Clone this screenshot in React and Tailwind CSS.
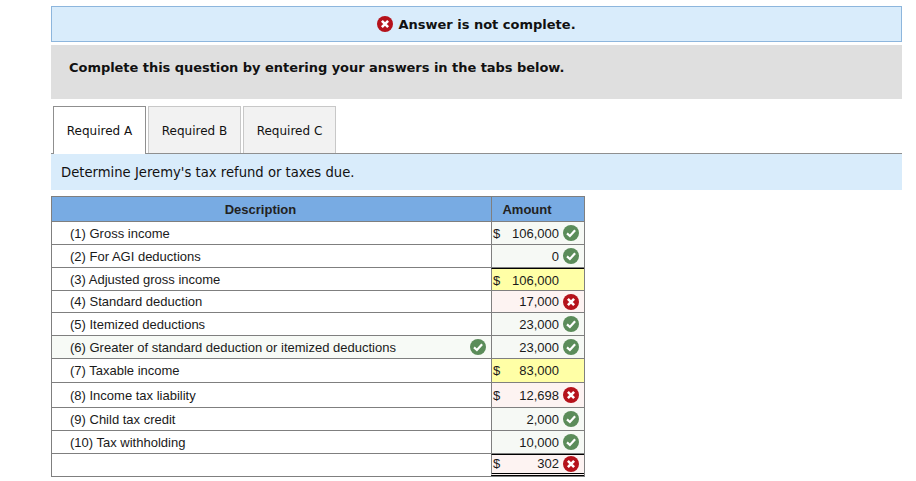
import React from "react";

const Ok = ({ className = "" }) => (
  <svg width="16" height="16" viewBox="0 0 16 16" className={className}>
    <circle cx="8" cy="8" r="8" fill="#5b8c5a" />
    <path d="M4 8.4l2.9 2.6 5.2-5.7" fill="none" stroke="#fff" strokeWidth="2.2" />
  </svg>
);
const Bad = ({ className = "" }) => (
  <svg width="16" height="16" viewBox="0 0 16 16" className={className}>
    <circle cx="8" cy="8" r="8" fill="#b5121b" />
    <path d="M4.9 4.9l6.2 6.2M11.1 4.9l-6.2 6.2" fill="none" stroke="#fff" strokeWidth="2.6" />
  </svg>
);

const rows = [
  { d: "(1) Gross income", v: "106,000", s: true, m: "ok", h: "h-[23px]", n: true },
  { d: "(2) For AGI deductions", v: "0", m: "ok", h: "h-[23px]", n: true },
  { d: "(3) Adjusted gross income", v: "106,000", s: true, y: true, h: "h-[23px]", top: true, n: true },
  { d: "(4) Standard deduction", v: "17,000", m: "bad", h: "h-[22px]" },
  { d: "(5) Itemized deductions", v: "23,000", m: "ok", h: "h-[23px]", n: true },
  { d: "(6) Greater of standard deduction or itemized deductions", v: "23,000", m: "ok", h: "h-[23px]", dm: true, n: true },
  { d: "(7) Taxable income", v: "83,000", s: true, y: true, h: "h-[24px]" },
  { d: "(8) Income tax liability", v: "12,698", s: true, m: "bad", h: "h-[25px]", n: true },
  { d: "(9) Child tax credit", v: "2,000", m: "ok", h: "h-[23px]", n: true },
  { d: "(10) Tax withholding", v: "10,000", m: "ok", h: "h-[23px]", n: true },
  { d: "", v: "302", s: true, m: "bad", h: "h-[22px]", top: true, last: true },
];

export default function App() {
  return (
    <div className="w-[916px] h-[481px] overflow-hidden bg-white pl-[51px] pt-[6px] font-['DejaVu_Sans',sans-serif] text-[#111]">
      <div className="w-[851px]">
        <div className="h-[36px] border border-[#8db6dd] bg-[#d9ecfb] flex items-center justify-center gap-[5px] text-[13px] font-bold">
          <Bad />
          <span className="pt-[1px]">Answer is not complete.</span>
        </div>
        <div className="mt-[3px] h-[54px] bg-[#dfdfdf] pl-[18px] pt-[14px] text-[13px] tracking-[-0.045px] leading-[18px] font-bold">
          Complete this question by entering your answers in the tabs below.
        </div>
        <div className="mt-[7px] h-[48px] flex gap-[2px] pl-[2px] border-b border-[#8f8f8f] text-[12px]">
          <div className="w-[93px] h-[48px] border border-b-0 border-[#8f8f8f] bg-white flex items-center justify-center">Required A</div>
          <div className="w-[93px] h-[47px] border border-b-0 border-[#c8c8c8] bg-[#f2f2f2] flex items-center justify-center pt-[1px]">Required B</div>
          <div className="w-[93px] h-[47px] border border-b-0 border-[#c8c8c8] bg-[#f2f2f2] flex items-center justify-center pt-[1px]">Required C</div>
        </div>
        <div className="h-[36px] bg-[#d9ecfb] pl-[10px] pt-[1px] flex items-center text-[13.2px]">Determine Jeremy's tax refund or taxes due.</div>
        <div className="mt-[6px] w-[534px] border-[1px] border-[#7f7f7f] font-['Liberation_Sans',sans-serif] text-[13px] text-[#1a1a1a]">
          <div className="flex h-[25px] bg-[#78abe3] border-b border-[#7f7f7f] font-bold text-[#222] text-[13px]">
            <div className="w-[439px] flex items-center justify-center pr-[22px] pt-[2px]">Description</div>
            <div className="flex-1 border-l border-[#7f7f7f] flex items-center justify-center pr-[22px] pt-[2px]">Amount</div>
          </div>
          {rows.map((r, i) => (
            <div key={i} className={`flex ${r.h} ${r.last ? "" : "border-b border-[#7f7f7f]"}`}>
              <div className={`w-[439px] flex items-center justify-between pl-[18px] pr-[5px] ${r.dm ? "bg-[#f7faf6]" : "bg-white"}`}>
                <span className={r.n ? "pt-[2px]" : ""}>{r.d}</span>
                {r.dm && <Ok />}
              </div>
              <div
                className={`relative flex-1 border-l border-[#7f7f7f] flex items-center pl-[1px] pr-[25px] ${
                  r.y ? "bg-[#ffffa6]" : r.m === "bad" ? "bg-[#fdf3f2]" : "bg-[#f6f9f5]"
                } ${r.top ? "border-t border-t-black" : ""} ${r.last ? "border-b-[3px] border-double border-b-black" : ""}`}
              >
                {r.s && <span className={r.n ? "pt-[2px]" : ""}>$</span>}
                <span className={`ml-auto ${r.n ? "pt-[2px]" : ""}`}>{r.v}</span>
                {r.m === "ok" && <Ok className="absolute right-[5px] top-[50%] translate-y-[-50%]" />}
                {r.m === "bad" && <Bad className="absolute right-[5px] top-[50%] translate-y-[-50%]" />}
              </div>
            </div>
          ))}
        </div>
      </div>
    </div>
  );
}
